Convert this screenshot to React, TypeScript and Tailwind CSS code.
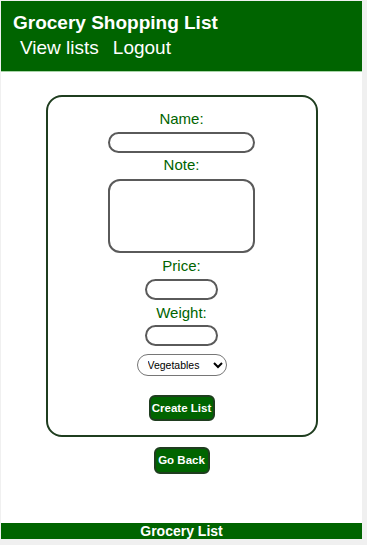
export default function App() {
  return (
    <div
      className="min-h-[545px] w-[367px] bg-[#f0f0f0] pl-px pt-px"
      style={{ fontFamily: '"Liberation Sans", Arial, sans-serif' }}
    >
      <div className="flex h-[538px] w-[361px] flex-col bg-white">
        <header className="h-[70px] bg-[#006400] px-3 pt-[10px] text-white">
          <h1 className="text-[19px] font-bold leading-[24px]">Grocery Shopping List</h1>
          <nav className="mt-[1px] flex gap-[14px] pl-[7px] text-[19px] leading-[24px]">
            <a href="#">View lists</a>
            <a href="#">Logout</a>
          </nav>
        </header>
        <div className="h-px bg-[#a8d4a8]" />

        <main className="flex flex-1 flex-col items-center pt-[23px]">
          <form className="flex w-[272px] flex-col items-center rounded-[16px] border-2 border-[#1f3d1f] pb-[14px] pt-[13px] text-[15px] leading-[18px] text-[#006400]">
            <label>Name:</label>
            <input className="mt-[4px] h-[21px] w-[147px] rounded-full border-2 border-[#5a5a5a] bg-white px-2 outline-none" />
            <label className="mt-[3px]">Note:</label>
            <textarea className="mt-[5px] h-[74px] w-[147px] resize-none rounded-[12px] border-2 border-[#5a5a5a] bg-white px-2 outline-none" />
            <label className="mt-[4px]">Price:</label>
            <input className="mt-[4px] h-[21px] w-[73px] rounded-full border-2 border-[#5a5a5a] bg-white px-2 outline-none" />
            <label className="mt-[4px]">Weight:</label>
            <input className="mt-[3px] h-[21px] w-[73px] rounded-full border-2 border-[#5a5a5a] bg-white px-2 outline-none" />
            <select
              className="mt-[8px] h-[22px] w-[90px] rounded-full border border-[#767676] bg-white pl-[6px] text-[10.5px] text-black outline-none"
              defaultValue="Vegetables"
            >
              <option>Vegetables</option>
              <option>Fruits</option>
              <option>Meat</option>
              <option>Dairy</option>
            </select>
            <button
              type="button"
              className="mt-[19px] h-[26px] w-[66px] whitespace-nowrap rounded-[6px] border-2 border-[#1f3d1f] bg-[#006400] text-[11.5px] font-bold text-white"
            >
              Create List
            </button>
          </form>

          <button
            type="button"
            className="mt-[10px] h-[27px] w-[56px] whitespace-nowrap rounded-[6px] border-2 border-[#1f3d1f] bg-[#006400] text-[11.5px] font-bold text-white"
          >
            Go Back
          </button>
        </main>

        <footer className="h-[16px] bg-[#006400] text-center text-[14px] font-bold leading-[16px] text-white">
          Grocery List
        </footer>
      </div>
    </div>
  );
}
